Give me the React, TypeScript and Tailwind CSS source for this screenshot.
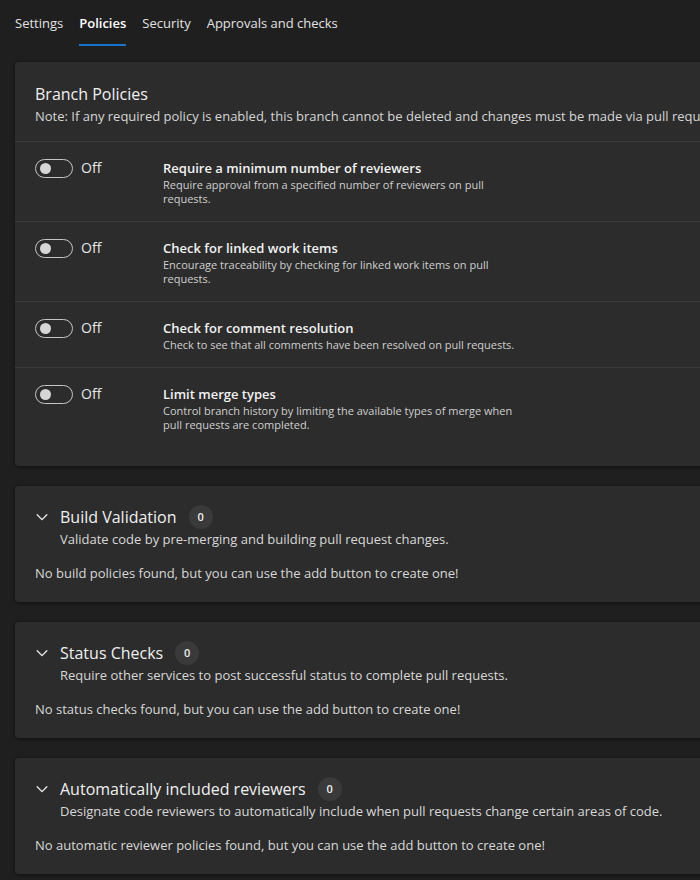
import React from 'react';

type Policy = {
    title: string;
    description: string;
};

const policies: Policy[] = [
    {
        title: 'Require a minimum number of reviewers',
        description: 'Require approval from a specified number of reviewers on pull requests.',
    },
    {
        title: 'Check for linked work items',
        description: 'Encourage traceability by checking for linked work items on pull requests.',
    },
    {
        title: 'Check for comment resolution',
        description: 'Check to see that all comments have been resolved on pull requests.',
    },
    {
        title: 'Limit merge types',
        description: 'Control branch history by limiting the available types of merge when pull requests are completed.',
    },
];

const sections = [
    {
        title: 'Build Validation',
        description: 'Validate code by pre-merging and building pull request changes.',
        empty: 'No build policies found, but you can use the add button to create one!',
    },
    {
        title: 'Status Checks',
        description: 'Require other services to post successful status to complete pull requests.',
        empty: 'No status checks found, but you can use the add button to create one!',
    },
    {
        title: 'Automatically included reviewers',
        description: 'Designate code reviewers to automatically include when pull requests change certain areas of code.',
        empty: 'No automatic reviewer policies found, but you can use the add button to create one!',
    },
];

const tabs = ['Settings', 'Policies', 'Security', 'Approvals and checks'];

const Toggle: React.FC = () => (
    <div className="flex items-center gap-[8px]">
        <div className="w-[38px] h-[19px] rounded-full border-[1.5px] border-[#c6c6c6] flex items-center pl-[4px]">
            <div className="w-[11px] h-[11px] rounded-full bg-[#d6d6d6]" />
        </div>
        <span className="text-[14px] text-[#e6e6e6] leading-[20px]">Off</span>
    </div>
);

const Chevron: React.FC = () => (
    <svg viewBox="0 0 16 16" className="w-[14px] h-[14px]" fill="none" stroke="#e6e6e6" strokeWidth="1.6" strokeLinecap="round" strokeLinejoin="round">
        <path d="M2.5 5.5 8 11l5.5-5.5" />
    </svg>
);

const App: React.FC = () => {
    return (
        <div
            className="w-[700px] min-h-screen overflow-hidden bg-[#201f1f] text-[#e6e6e6] pb-[10px]"
            style={{ fontFamily: '"Open Sans", "Noto Sans", sans-serif' }}
        >
            {/* Tab strip */}
            <div className="flex pl-[15px] pt-[13px] gap-[16px]">
                {tabs.map((tab) => (
                    <div key={tab} className="flex flex-col">
                        <span className={`text-[13px] leading-[20px] ${tab === 'Policies' ? 'text-white font-semibold' : 'text-[#e2e2e2]'}`}>
                            {tab}
                        </span>
                        <div className={`mt-[11px] h-[2px] ${tab === 'Policies' ? 'bg-[#1a73c8]' : 'bg-transparent'}`} />
                    </div>
                ))}
            </div>

            {/* Branch policies card */}
            <div className="ml-[15px] mt-[16px] w-[740px] rounded-[4px] bg-[#2c2c2c] shadow-[0_1px_4px_rgba(0,0,0,0.5)] pb-[19px]">
                <div className="px-[20px] pt-[20px] pb-[15px] border-b border-[#3b3b3b]">
                    <h2 className="text-[16px] leading-[24px] text-[#f0f0f0]">Branch Policies</h2>
                    <p className="whitespace-nowrap text-[13px] leading-[20px] text-[#d6d6d6]">
                        Note: If any required policy is enabled, this branch cannot be deleted and changes must be made via pull requests.
                    </p>
                </div>
                {policies.map((p, i) => (
                    <div
                        key={p.title}
                        className={`flex px-[20px] pt-[16px] pb-[15px] ${i < policies.length - 1 ? 'border-b border-[#3b3b3b]' : ''}`}
                    >
                        <div className="w-[128px] shrink-0">
                            <Toggle />
                        </div>
                        <div className="w-[365px]">
                            <div className="text-[13px] leading-[20px] font-semibold text-[#f2f2f2]">{p.title}</div>
                            <div className="text-[11px] leading-[14px] text-[#cfcfcf]">{p.description}</div>
                        </div>
                    </div>
                ))}
            </div>

            {/* Collapsible sections */}
            {sections.map((s) => (
                <div
                    key={s.title}
                    className="ml-[15px] mt-[20px] w-[740px] rounded-[4px] bg-[#2c2c2c] shadow-[0_1px_4px_rgba(0,0,0,0.5)] px-[20px] pt-[19px] pb-[19px]"
                >
                    <div className="flex items-center">
                        <div className="w-[25px] flex items-center">
                            <Chevron />
                        </div>
                        <h3 className="text-[16px] leading-[24px] text-[#f0f0f0]">{s.title}</h3>
                        <span className="ml-[12px] w-[24px] h-[24px] rounded-full bg-[#3a3a3a] flex items-center justify-center text-[11px] font-semibold text-[#eeeeee]">
                            0
                        </span>
                    </div>
                    <p className="pl-[25px] text-[13px] leading-[20px] text-[#d8d8d8]">{s.description}</p>
                    <p className="mt-[14px] text-[13px] leading-[20px] text-[#d8d8d8]">{s.empty}</p>
                </div>
            ))}
        </div>
    );
};

export default App;
